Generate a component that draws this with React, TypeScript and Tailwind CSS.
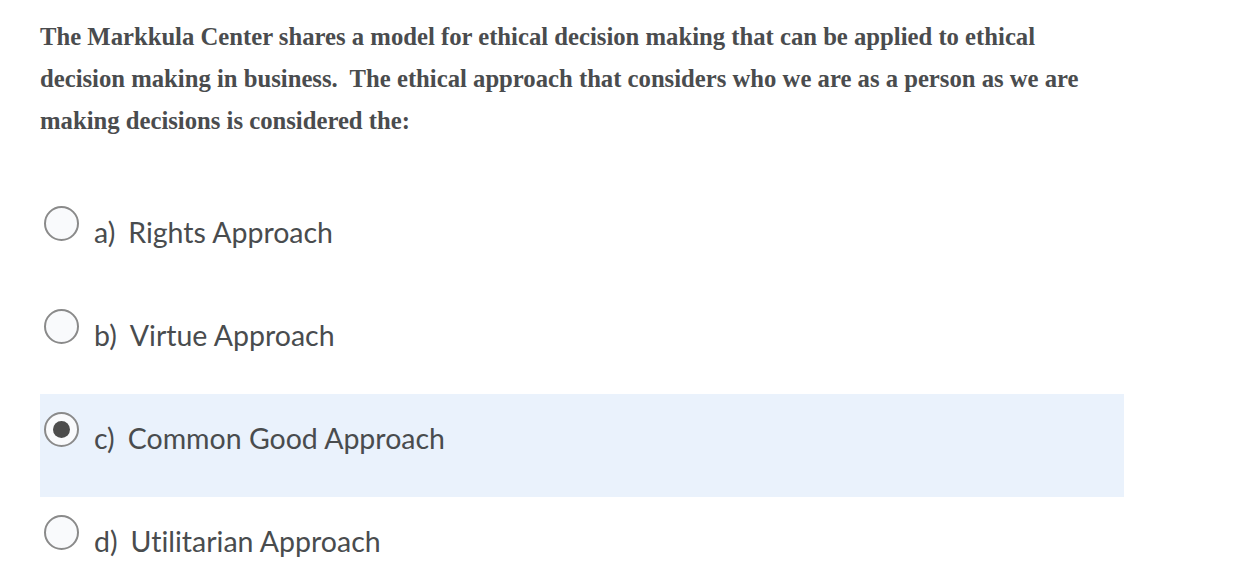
import React from "react";

const options = [
  { label: "a)", text: "Rights Approach", checked: false },
  { label: "b)", text: "Virtue Approach", checked: false },
  { label: "c)", text: "Common Good Approach", checked: true },
  { label: "d)", text: "Utilitarian Approach", checked: false },
];

function Radio({ checked }: { checked: boolean }) {
  return (
    <div className="w-[35px] h-[35px] rounded-full border-2 border-[#8a8a8a] bg-[#f9fafc] flex items-center justify-center shrink-0">
      {checked && <div className="w-[17px] h-[17px] rounded-full bg-[#4c4c4c]" />}
    </div>
  );
}

export default function App() {
  return (
    <div className="w-[1254px] h-[580px] bg-white overflow-hidden">
      <div className="pl-[40px] pt-[16px] w-[1124px]">
        <p
          className="text-[24.7px] leading-[42px] font-bold text-[#4a4c4e] w-[1060px]"
          style={{ fontFamily: '"Liberation Serif", "Times New Roman", serif' }}
        >
          The Markkula Center shares a model for ethical decision making that can be applied to ethical decision making in business.&nbsp; The ethical approach that considers who we are as a person as we are making decisions is considered the:
        </p>
        <div className="mt-[46px] flex flex-col">
          {options.map((o) => (
            <div
              key={o.label}
              className={`h-[103px] flex items-start pt-[18px] pl-[4px] ${o.checked ? "bg-[#eaf2fc]" : ""}`}
            >
              <Radio checked={o.checked} />
              <div
                className="ml-[15px] mt-[9px] text-[28.5px] leading-[34px] text-[#494c4e] flex gap-[13px] [font-variant-ligatures:none]"
                style={{ fontFamily: 'Lato, "Noto Sans", sans-serif' }}
              >
                <span>{o.label}</span>
                <span>{o.text}</span>
              </div>
            </div>
          ))}
        </div>
      </div>
    </div>
  );
}
